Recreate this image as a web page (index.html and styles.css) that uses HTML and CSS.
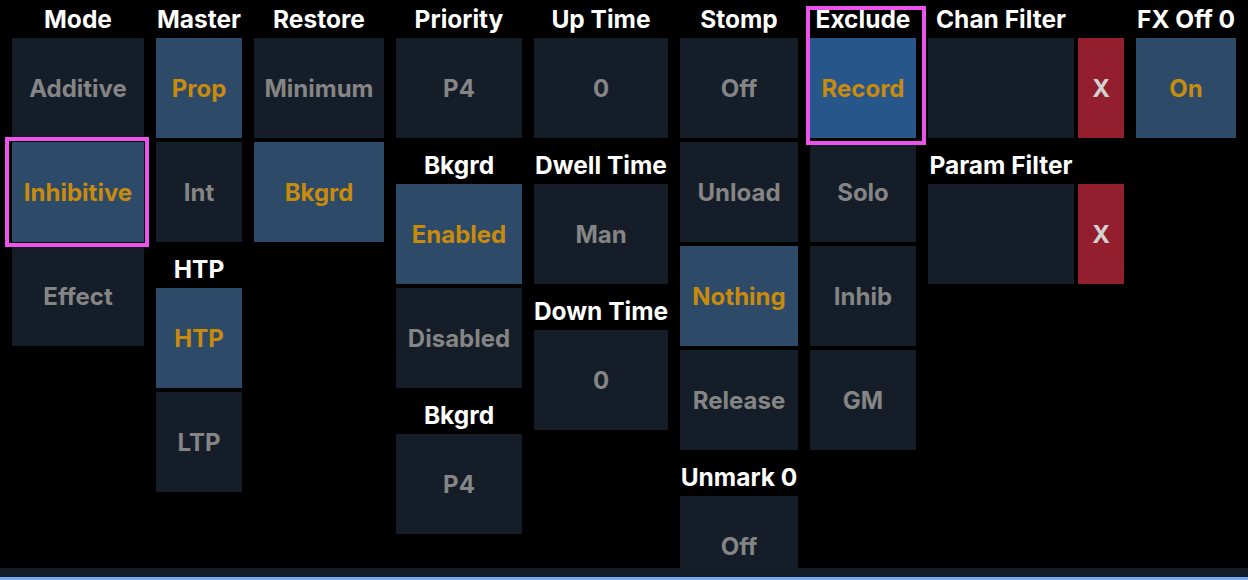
FILE: index.html
```html
<!DOCTYPE html>
<html>
<head>
<meta charset="utf-8">
<link rel="stylesheet" href="styles.css">
</head>
<body>
<div class="app">
  <div class="board">
    <div class="col c-mode">
      <div class="grp">
        <div class="hdr">Mode</div>
        <div class="btn">Additive</div>
        <div class="btn on">Inhibitive</div>
        <div class="btn">Effect</div>
      </div>
    </div>
    <div class="col c-master">
      <div class="grp">
        <div class="hdr">Master</div>
        <div class="btn on">Prop</div>
        <div class="btn">Int</div>
      </div>
      <div class="grp">
        <div class="hdr">HTP</div>
        <div class="btn on">HTP</div>
        <div class="btn">LTP</div>
      </div>
    </div>
    <div class="col c-restore">
      <div class="grp">
        <div class="hdr">Restore</div>
        <div class="btn">Minimum</div>
        <div class="btn on">Bkgrd</div>
      </div>
    </div>
    <div class="col c-priority">
      <div class="grp">
        <div class="hdr">Priority</div>
        <div class="btn">P4</div>
      </div>
      <div class="grp">
        <div class="hdr">Bkgrd</div>
        <div class="btn on">Enabled</div>
        <div class="btn">Disabled</div>
      </div>
      <div class="grp">
        <div class="hdr">Bkgrd</div>
        <div class="btn">P4</div>
      </div>
    </div>
    <div class="col c-uptime">
      <div class="grp">
        <div class="hdr">Up Time</div>
        <div class="btn">0</div>
      </div>
      <div class="grp">
        <div class="hdr">Dwell Time</div>
        <div class="btn">Man</div>
      </div>
      <div class="grp">
        <div class="hdr">Down Time</div>
        <div class="btn">0</div>
      </div>
    </div>
    <div class="col c-stomp">
      <div class="grp">
        <div class="hdr">Stomp</div>
        <div class="btn">Off</div>
        <div class="btn">Unload</div>
        <div class="btn on">Nothing</div>
        <div class="btn">Release</div>
      </div>
      <div class="grp">
        <div class="hdr">Unmark 0</div>
        <div class="btn">Off</div>
      </div>
    </div>
    <div class="col c-exclude">
      <div class="grp">
        <div class="hdr">Exclude</div>
        <div class="btn sel">Record</div>
        <div class="btn">Solo</div>
        <div class="btn">Inhib</div>
        <div class="btn">GM</div>
      </div>
    </div>
    <div class="col c-filter">
      <div class="grp">
        <div class="hdr hdr-field">Chan Filter</div>
        <div class="frow">
          <div class="btn field"></div>
          <div class="btn clear">X</div>
        </div>
      </div>
      <div class="grp">
        <div class="hdr hdr-field">Param Filter</div>
        <div class="frow">
          <div class="btn field"></div>
          <div class="btn clear">X</div>
        </div>
      </div>
    </div>
    <div class="col c-fx">
      <div class="grp">
        <div class="hdr">FX Off 0</div>
        <div class="btn on">On</div>
      </div>
    </div>
  </div>
  <div class="statusbar"></div>
  <div class="hl hl-inhib"></div>
  <div class="hl hl-excl"></div>
</div>
</body>
</html>
```
FILE: styles.css
```css
* { box-sizing: border-box; }
html, body {
  margin: 0;
  padding: 0;
  background: #000;
}
body {
  font-family: Inter, "Noto Sans", "Liberation Sans", sans-serif;
  font-weight: 700;
  -webkit-font-smoothing: antialiased;
}
.app {
  position: relative;
  width: 1248px;
  height: 580px;
  overflow: hidden;
  background: #000;
}
.board {
  display: flex;
  gap: 12px;
  padding-left: 12px;
  height: 568px;
  overflow: hidden;
}
.col {
  display: flex;
  flex-direction: column;
  gap: 8px;
  flex: none;
}
.c-mode { width: 132px; }
.c-master { width: 86px; }
.c-restore { width: 130px; }
.c-priority { width: 126px; }
.c-uptime { width: 134px; }
.c-stomp { width: 118px; }
.c-exclude { width: 106px; }
.c-filter { width: 196px; }
.c-fx { width: 100px; }
.grp {
  display: flex;
  flex-direction: column;
  gap: 4px;
}
.hdr {
  height: 38px;
  margin-bottom: -4px;
  display: flex;
  align-items: center;
  justify-content: center;
  color: #fff;
  font-size: 24.5px;
  white-space: nowrap;
  letter-spacing: 0;
}
.hdr-field { width: 146px; }
.btn {
  height: 100px;
  display: flex;
  align-items: center;
  justify-content: center;
  background: #141d28;
  color: #858585;
  font-size: 24px;
  white-space: nowrap;
}
.btn.on {
  background: #2d4a68;
  color: #c98b0c;
}
.btn.sel {
  background: #27568a;
  color: #c98b0c;
}
.frow {
  display: flex;
  gap: 4px;
}
.field { width: 146px; }
.clear {
  width: 46px;
  background: #931e2d;
  color: #d2d2d2;
}
.statusbar {
  height: 12px;
  background: #131c27;
  border-bottom: 3px solid #7aaaf0;
}
.hl {
  position: absolute;
  border: 4px solid #ec53ec;
  pointer-events: none;
}
.hl-inhib {
  left: 5px;
  top: 137px;
  width: 144px;
  height: 110px;
}
.hl-excl {
  left: 806px;
  top: 6px;
  width: 120px;
  height: 139px;
}
```
